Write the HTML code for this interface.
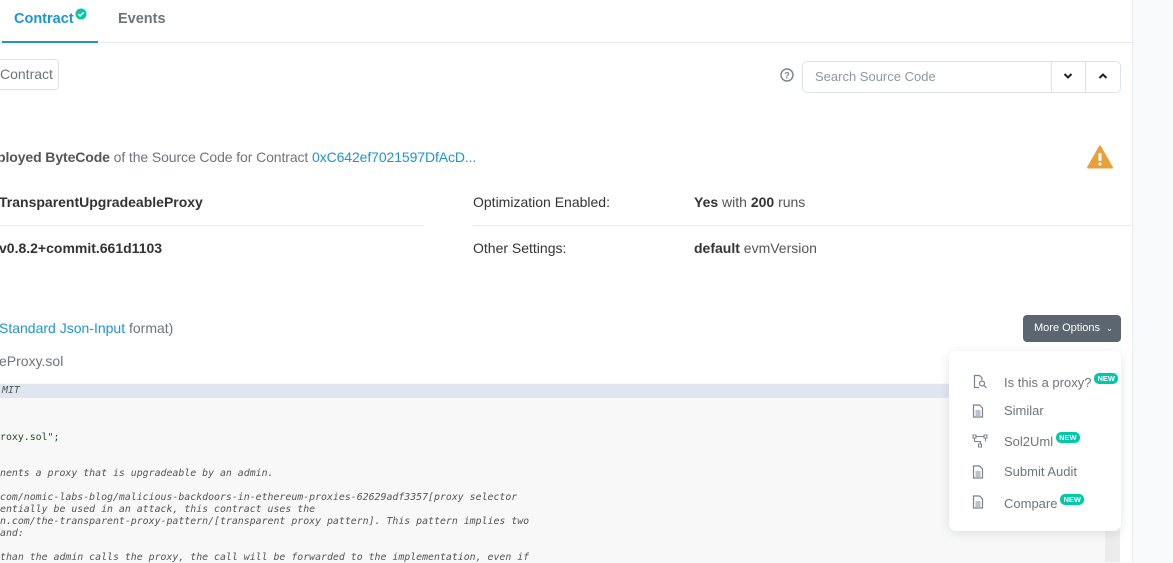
<!DOCTYPE html>
<html><head><meta charset="utf-8"><style>
*{box-sizing:border-box;margin:0;padding:0}
body{width:1173px;height:562px;overflow:hidden;background:#f8f9fa;font-family:"Liberation Sans",sans-serif;font-size:14px;color:#4a4f55;position:relative}
.a{position:absolute;white-space:nowrap}
.card{position:absolute;left:0;top:0;width:1133px;height:562px;background:#fff;border-right:1px solid #e9ecef}
.mono{font-family:"DejaVu Sans Mono","Liberation Mono",monospace;font-style:italic;font-size:9.9px;color:#555}
.new{display:inline-block;background:#00c9a7;color:#fff;font-size:7.5px;font-weight:bold;border-radius:5px;padding:1px 3px;vertical-align:6px;margin-left:3px;line-height:9px}
.mi{position:absolute;left:1004px;font-size:13px;color:#6c757d}
.ic{position:absolute;left:972px}
</style></head><body>
<div class="card"></div>
<div class="a" style="left:14px;top:11px;font-weight:bold;color:#1e94d2;font-size:14.5px">Contract</div>
<svg class="a" style="left:75px;top:8px" width="12" height="12" viewBox="0 0 12 12"><circle cx="6" cy="6" r="5.5" fill="#00c9a7"/><path d="M3.3 6.2l1.8 1.7 3.5-3.5" stroke="#fff" stroke-width="1.5" fill="none"/></svg>
<div class="a" style="left:118px;top:11px;font-weight:bold;color:#6c757d;font-size:14.5px">Events</div>
<div class="a" style="left:0;top:42px;width:1133px;height:1px;background:#e7eaf3"></div>
<div class="a" style="left:2px;top:41px;width:96px;height:2px;background:#1e94d2"></div>
<div class="a" style="left:-10px;top:59px;width:69px;height:31px;border:1px solid #dee2e6;border-radius:4px;padding:6px 0 0 9px;color:#6c757d;font-size:14px">Contract</div>
<svg class="a" style="left:780px;top:68px" width="14" height="14" viewBox="0 0 14 14"><circle cx="7" cy="7" r="6" fill="none" stroke="#77838f" stroke-width="1.4"/><text x="7" y="10.5" font-size="9" font-weight="bold" text-anchor="middle" fill="#77838f" font-family="Liberation Sans">?</text></svg>
<div class="a" style="left:802px;top:61px;width:319px;height:32px;border:1px solid #dee2e6;border-radius:5px"></div>
<div class="a" style="left:1051px;top:62px;width:1px;height:30px;background:#dee2e6"></div>
<div class="a" style="left:1085px;top:62px;width:1px;height:30px;background:#dee2e6"></div>
<div class="a" style="left:815px;top:69px;color:#8c98a4;font-size:13px">Search Source Code</div>
<svg class="a" style="left:1063px;top:72px" width="10" height="8" viewBox="0 0 10 8"><path d="M1.5 2l3.5 3.5L8.5 2" stroke="#1e2022" stroke-width="2" fill="none"/></svg>
<svg class="a" style="left:1098px;top:72px" width="10" height="8" viewBox="0 0 10 8"><path d="M1.5 6l3.5-3.5L8.5 6" stroke="#1e2022" stroke-width="2" fill="none"/></svg>
<div class="a" style="left:-3px;top:149px;font-size:14px;color:#6c757d;letter-spacing:-0.1px"><b style="color:#555">ployed ByteCode</b> of the Source Code for Contract <span style="color:#1e94d2">0xC642ef7021597DfAcD...</span></div>
<svg class="a" style="left:1087px;top:145px" width="26" height="24" viewBox="0 0 26 24"><path d="M13 1.5L25 22.5H1Z" fill="#e8a03a" stroke="#e8a03a" stroke-width="2" stroke-linejoin="round"/><rect x="11.5" y="8" width="3" height="8" rx="1" fill="#fff"/><rect x="11.5" y="17.5" width="3" height="3" rx="1" fill="#fff"/></svg>
<div class="a" style="left:-1px;top:194px;font-weight:bold;color:#333">TransparentUpgradeableProxy</div>
<div class="a" style="left:0;top:225px;width:424px;height:1px;background:#e7eaf3"></div>
<div class="a" style="left:-1px;top:240px;font-weight:bold;color:#333">v0.8.2+commit.661d1103</div>
<div class="a" style="left:473px;top:194px;color:#333">Optimization Enabled:</div>
<div class="a" style="left:473px;top:225px;width:660px;height:1px;background:#e7eaf3"></div>
<div class="a" style="left:473px;top:240px;color:#333">Other Settings:</div>
<div class="a" style="left:694px;top:194px;color:#555"><b style="color:#333">Yes</b> with <b style="color:#333">200</b> runs</div>
<div class="a" style="left:694px;top:240px;color:#555"><b style="color:#333">default</b> evmVersion</div>
<div class="a" style="left:-1px;top:320px;color:#6c757d"><span style="color:#1e94d2">Standard Json-Input</span> format)</div>
<div class="a" style="left:-1px;top:353px;color:#6c757d">eProxy.sol</div>
<div class="a" style="left:1023px;top:315px;width:98px;height:27px;background:#5b6670;border-radius:4px;color:#fff;font-size:11px;padding:7px 0 0 11px">More Options &nbsp;<span style="font-size:8px">&#8964;</span></div>
<div class="a" style="left:0;top:383px;width:1120px;height:179px;background:#f8f8f8;border-right:1px solid #e0e0e0"></div>
<div class="a" style="left:0;top:384px;width:1120px;height:14px;background:#dfe6ef"></div>
<div class="a" style="left:1105px;top:398px;width:15px;height:164px;background:#ececec"></div>
<div class="a mono" style="left:2px;top:385px">MIT</div>
<div class="a mono" style="left:0;top:432px;font-style:normal;color:#1f4d2a">roxy.sol";</div>
<div class="a mono" style="left:0;top:468px">nents a proxy that is upgradeable by an admin.</div>
<div class="a mono" style="left:0;top:492px">com/nomic-labs-blog/malicious-backdoors-in-ethereum-proxies-62629adf3357[proxy selector</div>
<div class="a mono" style="left:0;top:504px">entially be used in an attack, this contract uses the</div>
<div class="a mono" style="left:0;top:516px">n.com/the-transparent-proxy-pattern/[transparent proxy pattern]. This pattern implies two</div>
<div class="a mono" style="left:0;top:528px">and:</div>
<div class="a mono" style="left:0;top:552px">than the admin calls the proxy, the call will be forwarded to the implementation, even if</div>
<div class="a" style="left:949px;top:351px;width:172px;height:180px;background:#fff;border-radius:7px;box-shadow:0 2px 10px rgba(100,110,130,.18)"></div>
<svg class="ic" style="top:374px" width="17" height="15" viewBox="0 0 17 15"><path d="M7 13.5H2.5V1.5H7.5L10 4V6" stroke="#77838f" stroke-width="1.2" fill="none"/><circle cx="10" cy="9.5" r="2.5" stroke="#77838f" stroke-width="1.2" fill="none"/><path d="M12 11.5l2.5 2.5" stroke="#77838f" stroke-width="1.2"/></svg>
<div class="mi" style="top:373px">Is this a proxy?<span class="new">NEW</span></div>
<svg class="ic" style="top:404px" width="12" height="14" viewBox="0 0 12 14"><path d="M1.5 1h6l3 3v9h-9z" stroke="#77838f" stroke-width="1.2" fill="none"/><path d="M3.5 7h5M3.5 9h5M3.5 11h5" stroke="#77838f"/></svg>
<div class="mi" style="top:403px">Similar</div>
<svg class="ic" style="top:434px" width="17" height="14" viewBox="0 0 17 14"><rect x="1" y="1" width="3" height="3" stroke="#77838f" fill="none"/><rect x="12" y="1" width="3" height="3" stroke="#77838f" fill="none"/><rect x="6.5" y="10" width="3" height="3" stroke="#77838f" fill="none"/><path d="M4 2.5h8M2.5 4v3.5h6v2.5M13.5 4v3.5" stroke="#77838f" fill="none"/></svg>
<div class="mi" style="top:432px">Sol2Uml<span class="new">NEW</span></div>
<svg class="ic" style="top:465px" width="12" height="14" viewBox="0 0 12 14"><path d="M1.5 1h6l3 3v9h-9z" stroke="#77838f" stroke-width="1.2" fill="none"/><path d="M3.5 7h5M3.5 9h5M3.5 11h5" stroke="#77838f"/></svg>
<div class="mi" style="top:464px">Submit Audit</div>
<svg class="ic" style="top:495px" width="12" height="14" viewBox="0 0 12 14"><path d="M1.5 1h6l3 3v9h-9z" stroke="#77838f" stroke-width="1.2" fill="none"/><path d="M3.5 7h5M3.5 9h5M3.5 11h5" stroke="#77838f"/></svg>
<div class="mi" style="top:494px">Compare<span class="new">NEW</span></div>
</body></html>
